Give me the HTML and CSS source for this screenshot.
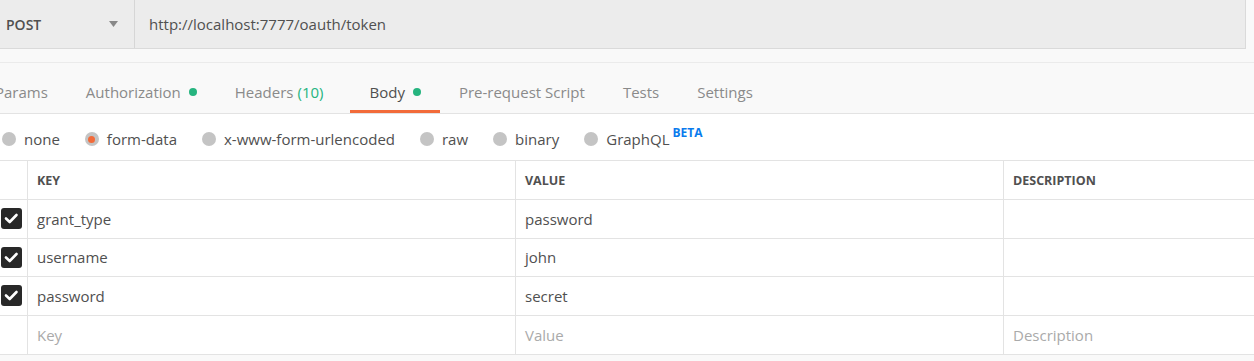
FILE: index.html
```html
<!DOCTYPE html>
<html lang="en">
<head>
    <meta charset="UTF-8">
    <meta name="viewport" content="width=device-width, initial-scale=1.0">
    <title>POST http://localhost:7777/oauth/token</title>
    <link rel="stylesheet" href="styles.css">
</head>
<body>
    <div class="url-bar">
        <div class="method">
            <span>POST</span>
            <svg class="caret" width="9" height="6" viewBox="0 0 9 6"><path d="M0 0 L9 0 L4.5 6 Z" fill="#888"/></svg>
        </div>
        <div class="url">http://localhost:7777/oauth/token</div>
    </div>

    <div class="tabs">
        <div class="tab">Params</div>
        <div class="tab">Authorization <span class="dot"></span></div>
        <div class="tab headers">Headers <span class="count">(10)</span></div>
        <div class="tab active">Body <span class="dot"></span></div>
        <div class="tab">Pre-request Script</div>
        <div class="tab">Tests</div>
        <div class="tab">Settings</div>
    </div>

    <div class="body-types">
        <label class="radio"><span class="circle"></span>none</label>
        <label class="radio selected"><span class="circle"></span>form-data</label>
        <label class="radio"><span class="circle"></span>x-www-form-urlencoded</label>
        <label class="radio"><span class="circle"></span>raw</label>
        <label class="radio"><span class="circle"></span>binary</label>
        <label class="radio"><span class="circle"></span>GraphQL<sup class="beta">BETA</sup></label>
    </div>

    <div class="params">
        <div class="row head">
            <div class="cell check"></div>
            <div class="cell">KEY</div>
            <div class="cell">VALUE</div>
            <div class="cell">DESCRIPTION</div>
        </div>
        <div class="row">
            <div class="cell check"><svg width="21" height="21" viewBox="0 0 21 21"><rect width="21" height="21" rx="3" fill="#282828"/><path d="M5 10.5 L8.7 14 L15.5 7" stroke="#fff" stroke-width="2.6" fill="none" stroke-linecap="round" stroke-linejoin="round"/></svg></div>
            <div class="cell">grant_type</div>
            <div class="cell">password</div>
            <div class="cell"></div>
        </div>
        <div class="row">
            <div class="cell check"><svg width="21" height="21" viewBox="0 0 21 21"><rect width="21" height="21" rx="3" fill="#282828"/><path d="M5 10.5 L8.7 14 L15.5 7" stroke="#fff" stroke-width="2.6" fill="none" stroke-linecap="round" stroke-linejoin="round"/></svg></div>
            <div class="cell">username</div>
            <div class="cell">john</div>
            <div class="cell"></div>
        </div>
        <div class="row">
            <div class="cell check"><svg width="21" height="21" viewBox="0 0 21 21"><rect width="21" height="21" rx="3" fill="#282828"/><path d="M5 10.5 L8.7 14 L15.5 7" stroke="#fff" stroke-width="2.6" fill="none" stroke-linecap="round" stroke-linejoin="round"/></svg></div>
            <div class="cell">password</div>
            <div class="cell">secret</div>
            <div class="cell"></div>
        </div>
        <div class="row">
            <div class="cell check"></div>
            <div class="cell placeholder">Key</div>
            <div class="cell placeholder">Value</div>
            <div class="cell placeholder">Description</div>
        </div>
    </div>
</body>
</html>
```

FILE: styles.css
```css
body {
    margin: 0;
    font-family: "Open Sans", "Liberation Sans", sans-serif;
    font-size: 15px;
    color: #505050;
    background-color: #f9f9f9;
    overflow: hidden;
}
.url-bar {
    display: flex;
    height: 48px;
    margin-right: 8px;
    border-bottom: 1px solid #dadada;
    border-right: 1px solid #dadada;
    background-color: #ececec;
}
.method {
    width: 135px;
    display: flex;
    align-items: center;
    justify-content: space-between;
    padding: 0 16px 0 6px;
    box-sizing: border-box;
    border-right: 1px solid #d6d6d6;
    font-size: 14px;
    font-weight: 600;
}
.url {
    display: flex;
    align-items: center;
    padding-left: 14px;
}
.tabs {
    display: flex;
    height: 50px;
    margin-top: 13px;
    border-top: 1px solid #ebebeb;
    border-bottom: 1px solid #e3e3e3;
    margin-left: -24px;
}
.tab {
    display: flex;
    align-items: center;
    gap: 6px;
    padding: 11px 19px 0;
    color: #8a8a8a;
    border-bottom: 3px solid transparent;
}
.tab.headers {
    margin-right: 8px;
}
.tab.active {
    color: #505050;
    border-bottom-color: #f26b3a;
}
.dot {
    width: 8px;
    height: 8px;
    border-radius: 50%;
    background-color: #26b47f;
    margin-left: 2px;
}
.count {
    color: #26b47f;
    margin-left: -2px;
}
.body-types {
    display: flex;
    align-items: center;
    height: 47px;
    padding-top: 4px;
    box-sizing: border-box;
    background-color: #fff;
    border-bottom: 1px solid #e3e3e3;
    padding-left: 2px;
}
.radio {
    display: flex;
    align-items: center;
    margin-right: 25px;
}
.circle {
    width: 14px;
    height: 14px;
    border-radius: 50%;
    background-color: #c4c4c4;
    margin-right: 8px;
    display: flex;
    align-items: center;
    justify-content: center;
}
.radio.selected .circle::after {
    content: "";
    width: 7px;
    height: 7px;
    border-radius: 50%;
    background-color: #f26b3a;
}
.beta {
    font-size: 12px;
    font-weight: 700;
    color: #097bed;
    margin-left: 3px;
    align-self: flex-start;
    margin-top: -5px;
}
.params {
    background-color: #fff;
    border-bottom: 1px solid #e3e3e3;
}
.row {
    display: grid;
    grid-template-columns: 27px 488px 488px 1fr;
    height: 38.5px;
    border-bottom: 1px solid #e3e3e3;
    box-sizing: border-box;
}
.row:last-child {
    border-bottom: none;
}
.row.head {
    height: 39px;
    font-size: 12.5px;
    font-weight: 700;
    color: #505050;
}
.cell {
    display: flex;
    align-items: center;
    padding-left: 9px;
    border-left: 1px solid #e3e3e3;
}
.cell.check {
    border-left: none;
    padding-left: 1px;
}
.placeholder {
    color: #aaa;
}
```
